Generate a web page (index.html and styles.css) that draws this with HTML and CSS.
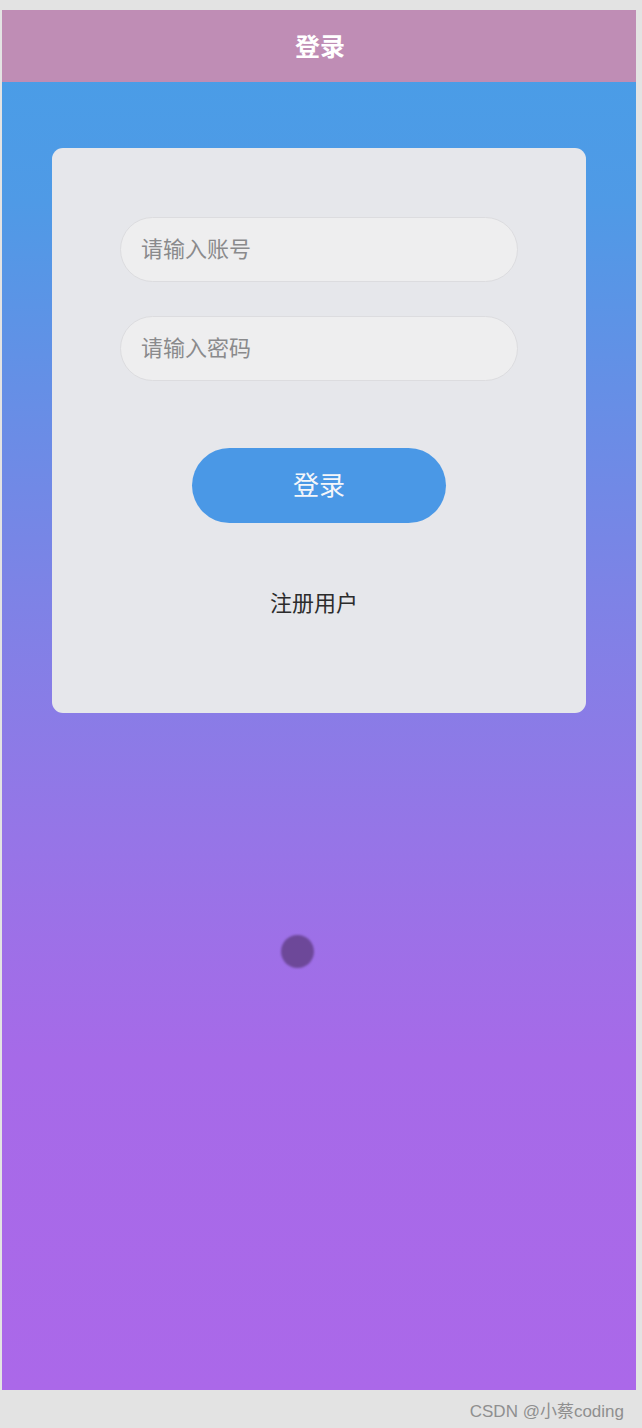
FILE: index.html
```html
<!DOCTYPE html>
<html lang="zh">
<head>
<meta charset="utf-8">
<title>登录</title>
<link rel="stylesheet" href="styles.css">
</head>
<body>
<div class="frame">
  <div class="app">
    <header class="bar">登录</header>
    <main class="content">
      <section class="card">
        <div class="field"><input class="input" type="text" placeholder="请输入账号"></div>
        <div class="field"><input class="input" type="password" placeholder="请输入密码"></div>
        <button class="btn" type="button">登录</button>
        <a class="reg">注册用户</a>
      </section>
      <div class="dot-row"><span class="dot"></span></div>
    </main>
  </div>
  <footer class="mark">CSDN @小蔡coding</footer>
</div>
</body>
</html>
```
FILE: styles.css
```css
html, body {
  margin: 0;
  padding: 0;
}
body {
  width: 642px;
  height: 1428px;
  background: #e3e3e3;
  font-family: "Noto Sans CJK SC", "Liberation Sans", sans-serif;
  overflow: hidden;
}
.frame {
  display: flex;
  flex-direction: column;
  height: 1428px;
  padding: 10px 6px 0 2px;
  box-sizing: border-box;
}
.app {
  height: 1380px;
  display: flex;
  flex-direction: column;
  background: linear-gradient(180deg, #489ee7 0%, #4f9ae6 14%, #7d83e6 42%, #9675e7 60%, #a66ae8 76%, #ab68e9 100%);
}
.bar {
  height: 72px;
  flex: none;
  box-sizing: border-box;
  padding: 0 0 3px 2px;
  background: #bf8db5;
  color: #fff;
  font-size: 25px;
  font-weight: 700;
  display: flex;
  align-items: center;
  justify-content: center;
}
.content {
  flex: 1;
  display: flex;
  flex-direction: column;
  padding: 66px 50px 0 50px;
}
.card {
  height: 565px;
  box-sizing: border-box;
  background: #e6e7eb;
  border-radius: 11px;
  display: flex;
  flex-direction: column;
  align-items: center;
  padding-top: 69px;
}
.field {
  width: 398px;
  margin-bottom: 34px;
}
.input {
  width: 100%;
  height: 65px;
  box-sizing: border-box;
  border: 1.5px solid #dcdcdf;
  border-radius: 33px;
  background: #eeeeef;
  padding: 0 20px 5px;
  font-family: inherit;
  font-size: 22px;
  color: #333;
  outline: none;
}
.input::placeholder {
  color: #8a8a8c;
}
.btn {
  margin-top: 33px;
  width: 254px;
  height: 75px;
  border: none;
  border-radius: 38px;
  background: #4a98e6;
  color: #f4f6fa;
  font-family: inherit;
  font-size: 26px;
  padding: 0 0 4px;
  cursor: pointer;
}
.reg {
  margin-top: 62px;
  font-size: 22px;
  color: #2c2c2c;
  margin-right: 10px;
}
.dot-row {
  display: flex;
  justify-content: center;
  padding-top: 222px;
  padding-right: 44px;
}
.dot {
  width: 33px;
  height: 33px;
  border-radius: 50%;
  background: #6d4899;
  filter: blur(1px);
}
.mark {
  height: 38px;
  display: flex;
  align-items: center;
  justify-content: flex-end;
  padding-right: 12px;
  font-family: "Liberation Sans", "Noto Sans CJK SC", sans-serif;
  font-size: 17px;
  color: #8f8f8f;
}
```
